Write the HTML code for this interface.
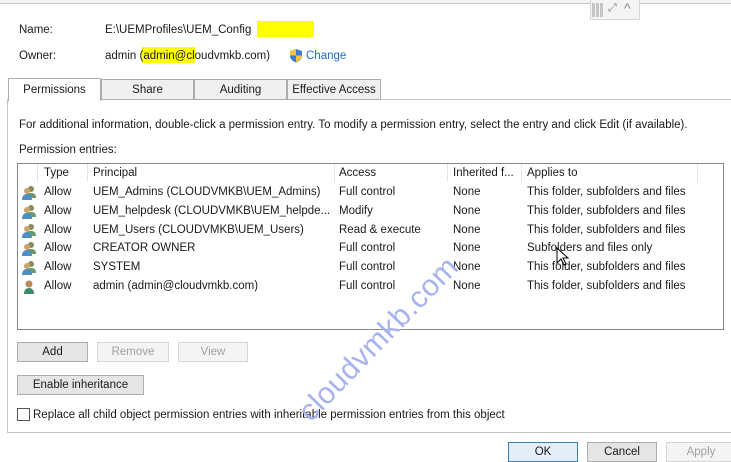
<!DOCTYPE html>
<html><head><style>
*{margin:0;padding:0;box-sizing:border-box}
body{width:731px;height:462px;overflow:hidden;background:#fff;font-family:"Liberation Sans",sans-serif;font-size:11.5px;color:#1a1a1a;position:relative}
.a{position:absolute;white-space:nowrap}
.btn{position:absolute;border:1px solid #adadad;background:#e5e5e5;text-align:center;line-height:18px;height:20px}
.dis{color:#a0a0a0;border-color:#d5d5d5;background:#f4f4f4}
.tab{position:absolute;top:79px;height:21px;border:1px solid #acacac;background:#f0f0f0;text-align:center;line-height:19px}
.hd{position:absolute;top:164px;height:18px;line-height:19px;border-right:1px solid #e5e5e5}
</style></head><body>
<div class="a" style="left:0;top:0;width:731px;height:4px;border-bottom:1px solid #c8c8c8;background:#f4f4f4"></div>
<div class="a" style="left:590px;top:0;width:50px;height:20px;background:#f4f4f4;border:1px solid #d6d6d6;border-top:none"></div>
<div class="a" style="left:592px;top:3px;width:12px;height:14px;background:repeating-linear-gradient(90deg,#bbb 0 3px,#f4f4f4 3px 4px),#bbb;opacity:.8"></div>
<div class="a" style="left:608px;top:2px;font-size:11px;color:#888">⤢</div>
<div class="a" style="left:624px;top:0;font-size:14px;color:#888">^</div>
<div class="a" style="left:19px;top:24px">Name:</div>
<div class="a" style="left:105px;top:24px">E:\UEMProfiles\UEM_Config</div>
<div class="a" style="left:257px;top:21px;width:57px;height:16px;background:#ffff00"></div>
<div class="a" style="left:19px;top:50px">Owner:</div>
<div class="a" style="left:142px;top:47px;width:53px;height:16px;background:#ffff00"></div>
<div class="a" style="left:105px;top:50px">admin (admin@cloudvmkb.com)</div>
<svg class="a" style="left:289px;top:48px" width="14" height="15" viewBox="0 0 14 15"><path d="M7 1L1 3v5c0 3 3 5.5 6 6.5 3-1 6-3.5 6-6.5V3z" fill="#3a7bd5"/><path d="M7 1v6.5H1V3zM7 7.5h6c0 3-3 5.5-6 6.5z" fill="#f2c53d"/></svg>
<div class="a" style="left:306px;top:50px;color:#1e6bc4">Change</div>
<div class="a" style="left:7px;top:99px;width:730px;height:334px;border:1px solid #c4c4c4;border-right:none"></div>
<div class="tab" style="left:101px;width:93px;line-height:20px">Share</div>
<div class="tab" style="left:194px;width:93px;line-height:20px">Auditing</div>
<div class="tab" style="left:287px;width:94px;line-height:20px">Effective Access</div>
<div class="tab" style="left:8px;top:78px;width:93px;height:23px;background:#fff;border-bottom:none;line-height:22px">Permissions</div>
<div class="a" style="left:19px;top:119px">For additional information, double-click a permission entry. To modify a permission entry, select the entry and click Edit (if available).</div>
<div class="a" style="left:19px;top:144px">Permission entries:</div>
<div class="a" style="left:17px;top:163px;width:707px;height:167px;border:1px solid #828790"></div>
<div class="hd" style="left:18px;width:20px"></div>
<div class="hd" style="left:38px;width:50px;padding-left:6px">Type</div>
<div class="hd" style="left:88px;width:247px;padding-left:5px">Principal</div>
<div class="hd" style="left:335px;width:113px;padding-left:4px">Access</div>
<div class="hd" style="left:448px;width:74px;padding-left:5px">Inherited f...</div>
<div class="hd" style="left:522px;width:176px;padding-left:5px">Applies to</div>
<div id="rows"></div>
<div class="btn" style="left:17px;top:342px;width:71px">Add</div>
<div class="btn dis" style="left:97px;top:342px;width:72px">Remove</div>
<div class="btn dis" style="left:178px;top:342px;width:70px">View</div>
<div class="btn" style="left:17px;top:375px;width:127px">Enable inheritance</div>
<div class="a" style="left:17px;top:408px;width:13px;height:13px;border:1px solid #555;background:#fff"></div>
<div class="a" style="left:33px;top:409px">Replace all child object permission entries with inheritable permission entries from this object</div>
<div class="btn" style="left:508px;top:442px;width:70px;border-color:#3c7fb1;background:#e3eef8">OK</div>
<div class="btn" style="left:587px;top:442px;width:70px">Cancel</div>
<div class="btn dis" style="left:666px;top:442px;width:70px">Apply</div>
<div class="a" style="left:292px;top:405px;font-size:30px;color:#a6b3ee;transform:rotate(-46deg);transform-origin:0 0;letter-spacing:0.5px">cloudvmkb.com</div>
<script>
var r=[["UEM_Admins (CLOUDVMKB\\UEM_Admins)","Full control","This folder, subfolders and files",1],
["UEM_helpdesk (CLOUDVMKB\\UEM_helpde...","Modify","This folder, subfolders and files",1],
["UEM_Users (CLOUDVMKB\\UEM_Users)","Read &amp; execute","This folder, subfolders and files",1],
["CREATOR OWNER","Full control","Subfolders and files only",1],
["SYSTEM","Full control","This folder, subfolders and files",1],
["admin (admin@cloudvmkb.com)","Full control","This folder, subfolders and files",0]];
var h="";r.forEach(function(x,i){var t=186+i*18.8;
var ic=x[3]?'<svg class="a" style="left:21px;top:'+(t-1)+'px" width="16" height="16"><circle cx="10" cy="4" r="3" fill="#8a8a5a"/><path d="M5 13c0-4 2-5 5-5s5 1 5 5z" fill="#6a9a6a"/><circle cx="6" cy="6" r="3" fill="#c9a46a"/><path d="M1 15c0-4 2-6 5-6s5 2 5 6z" fill="#4d8fc0"/></svg>':'<svg class="a" style="left:21px;top:'+(t-1)+'px" width="16" height="16"><circle cx="8" cy="5" r="3.5" fill="#b58a5a"/><path d="M3 15c0-4 2-6 5-6s5 2 5 6z" fill="#3a8a6a"/></svg>';
h+=ic+'<div class="a" style="left:44px;top:'+t+'px">Allow</div><div class="a" style="left:93px;top:'+t+'px">'+x[0]+'</div><div class="a" style="left:339px;top:'+t+'px">'+x[1]+'</div><div class="a" style="left:453px;top:'+t+'px">None</div><div class="a" style="left:527px;top:'+t+'px">'+x[2]+'</div>';});
document.getElementById("rows").innerHTML=h;
</script>
<svg class="a" style="left:556px;top:247px" width="14" height="20"><path d="M1 1v15l4-4 3 6 2-1-3-6h5z" fill="#fff" stroke="#000"/></svg>
</body></html>
